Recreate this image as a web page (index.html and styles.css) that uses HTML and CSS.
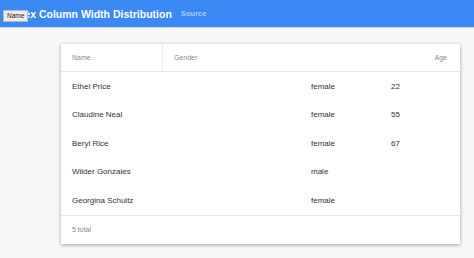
FILE: index.html
```html
<!DOCTYPE html>
<html lang="en">

<head>
    <meta charset="UTF-8">
    <meta name="viewport" content="width=device-width, initial-scale=1.0">
    <title>Flex Column Width Distribution</title>

    <link rel="stylesheet" href="styles.css">

</head>

<body>
    <header class="topbar">
        <h1 class="title">Flex Column Width Distribution</h1>
        <a class="source">Source</a>
    </header>

    <div class="tooltip">Name</div>

    <main class="content">
        <div class="card">
            <div class="headRow">
                <div class="thName">Name</div>
                <div class="thGender">Gender</div>
                <div class="thAge">Age</div>
            </div>

            <div class="row">
                <div class="cellName">Ethel Price</div>
                <div class="cellGender">female</div>
                <div class="cellAge">22</div>
            </div>
            <div class="row">
                <div class="cellName">Claudine Neal</div>
                <div class="cellGender">female</div>
                <div class="cellAge">55</div>
            </div>
            <div class="row">
                <div class="cellName">Beryl Rice</div>
                <div class="cellGender">female</div>
                <div class="cellAge">67</div>
            </div>
            <div class="row">
                <div class="cellName">Wilder Gonzales</div>
                <div class="cellGender">male</div>
                <div class="cellAge"></div>
            </div>
            <div class="row">
                <div class="cellName">Georgina Schultz</div>
                <div class="cellGender">female</div>
                <div class="cellAge"></div>
            </div>

            <div class="footer">5 total</div>
        </div>
    </main>

</body>

</html>
```

FILE: styles.css
```css
body {
    font-family: "Liberation Sans", Arial, Helvetica, sans-serif;
    background-color: #f8f8f8;
    color: #333;
    margin: 0px;
    height: 258px;
    overflow: hidden;
}

.topbar {
    display: flex;
    align-items: center;
    height: 27px;
    padding-left: 15px;
    background-color: #3a89f5;
    box-shadow: 0 1px 1px rgba(0, 0, 0, 0.15);
}

.title {
    margin: 0px;
    font-size: 10.5px;
    font-weight: bold;
    color: #fff;
}

.source {
    margin-left: 9px;
    font-size: 7.6px;
    font-weight: bold;
    color: #a9c9f7;
}

.tooltip {
    position: absolute;
    left: 3px;
    top: 10px;
    height: 10px;
    padding: 0 3px;
    line-height: 10px;
    font-size: 6.5px;
    color: #222;
    background-color: #ececec;
    border: 1px solid #b8b8b8;
}

.content {
    padding: 17px 0 0 61px;
}

.card {
    width: 399px;
    background-color: #fff;
    box-shadow: 0 1px 4px rgba(0, 0, 0, 0.35);
}

.headRow {
    display: flex;
    height: 27px;
    border-bottom: 1px solid #e8e8e8;
    font-size: 7px;
    color: #8a8a8a;
}

.headRow div {
    display: flex;
    align-items: center;
}

.thName {
    width: 90px;
    padding-left: 11px;
    border-right: 1px solid #ececec;
}

.thGender {
    flex: 1;
    padding-left: 11px;
}

.thAge {
    padding-right: 13px;
}

.row {
    display: flex;
    align-items: center;
    height: 28.5px;
    font-size: 8px;
}

.cellName {
    width: 239px;
    padding-left: 11px;
}

.cellGender {
    width: 80px;
}

.cellAge {
    flex: 1;
}

.footer {
    display: flex;
    align-items: center;
    height: 28px;
    padding-left: 11px;
    border-top: 1px solid #e8e8e8;
    font-size: 7px;
    color: #888;
}
```
